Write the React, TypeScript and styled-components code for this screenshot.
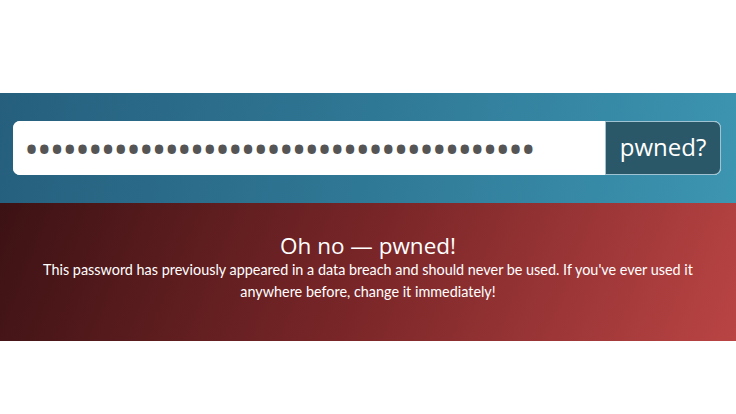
import React from "react";
import styled, { createGlobalStyle } from "styled-components";

const Global = createGlobalStyle`
  html, body { margin: 0; padding: 0; background: #ffffff; }
  body { font-family: "Open Sans", "Noto Sans", sans-serif; }
  * { box-sizing: border-box; }
`;

const Page = styled.div`
  width: 736px;
  height: 414px;
  padding-top: 93px;
  background: #ffffff;
`;

const SearchBand = styled.section`
  padding: 28px 15px 28px 13px;
  background: linear-gradient(100deg, #265f7e 0%, #2f7895 50%, #3c95b1 100%);
`;

const SearchForm = styled.form`
  display: flex;
  height: 54px;
  border-radius: 7px;
  overflow: hidden;
  background: #ffffff;
`;

const PasswordInput = styled.input`
  flex: 1;
  min-width: 0;
  border: 0;
  outline: none;
  padding: 0 0 0 11px;
  background: #ffffff;
  color: #555555;
  font-family: "Open Sans", sans-serif;
  font-size: 40px;
  letter-spacing: -2.3px;
`;

const SubmitButton = styled.button`
  width: 116px;
  border: 1px solid #9fc3d2;
  border-radius: 0 7px 7px 0;
  background: #2b5868;
  color: #ffffff;
  font-family: "Open Sans", sans-serif;
  font-size: 24px;
  padding: 0 0 4px 0;
  cursor: pointer;
`;

const ResultBand = styled.section`
  padding: 27px 40px 38px;
  background: linear-gradient(112deg, #3c1214 0%, #7a2628 50%, #ba4444 100%);
  color: #ffffff;
  text-align: center;
`;

const Title = styled.h2`
  margin: 0;
  font-family: "Open Sans", sans-serif;
  font-weight: 400;
  font-size: 22.5px;
  line-height: 31px;
`;

const Message = styled.p`
  margin: -2px 0 0;
  font-family: Lato, sans-serif;
  font-size: 14.4px;
  line-height: 22px;
`;

export default function App() {
  return (
    <>
      <Global />
      <Page>
        <SearchBand>
          <SearchForm onSubmit={(e) => e.preventDefault()}>
            <PasswordInput
              type="password"
              readOnly
              value={"passwordpasswordpasswordpasswordpassword"}
            />
            <SubmitButton type="submit">pwned?</SubmitButton>
          </SearchForm>
        </SearchBand>
        <ResultBand>
          <Title>Oh no — pwned!</Title>
          <Message>
            This password has previously appeared in a data breach and should never be used. If you've ever used it
            anywhere before, change it immediately!
          </Message>
        </ResultBand>
      </Page>
    </>
  );
}
